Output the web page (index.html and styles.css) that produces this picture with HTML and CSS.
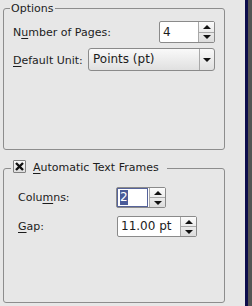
FILE: index.html
```html
<!DOCTYPE html>
<html lang="en">

<head>
    <meta charset="UTF-8">
    <title>Document</title>
    <link rel="stylesheet" href="styles.css">
</head>

<body>
    <div class="screen">
        <div class="pane">
            <fieldset class="group options">
                <legend>Options</legend>
                <div class="row">
                    <label>N<u>u</u>mber of Pages:</label>
                    <div class="spin pages">
                        <span class="val">4</span>
                        <span class="btns"><i class="up"></i><i class="down"></i></span>
                    </div>
                </div>
                <div class="row">
                    <label><u>D</u>efault Unit:</label>
                    <div class="combo">
                        <span class="val">Points (pt)</span>
                        <span class="arrow"><i class="down"></i></span>
                    </div>
                </div>
            </fieldset>

            <fieldset class="group frames">
                <legend>
                    <span class="check">
                        <svg width="9" height="9" viewBox="0 0 9 9">
                            <path d="M1 1 L8 8 M8 1 L1 8" stroke="#111" stroke-width="2.4" fill="none" />
                        </svg>
                    </span>
                    <span><u>A</u>utomatic Text Frames</span>
                </legend>
                <div class="form">
                    <label>Colu<u>m</u>ns:</label>
                    <div class="spin cols">
                        <span class="val focus"><b>2</b></span>
                        <span class="btns"><i class="up"></i><i class="down"></i></span>
                    </div>
                    <label><u>G</u>ap:</label>
                    <div class="spin gap">
                        <span class="val">11.00 pt</span>
                        <span class="btns"><i class="up"></i><i class="down"></i></span>
                    </div>
                </div>
            </fieldset>
        </div>
        <div class="edge"></div>
    </div>
</body>

</html>
```

FILE: styles.css
```css
* {
    margin: 0;
    padding: 0;
    box-sizing: border-box;
}

body {
    width: 252px;
    height: 306px;
    overflow: hidden;
    background: #545454;
    font-family: "DejaVu Sans", sans-serif;
    font-size: 11px;
    line-height: 13px;
    color: #1c1c1c;
}

.screen {
    display: flex;
    height: 306px;
}

.pane {
    width: 245px;
    background: #e7e7e7;
    padding: 2px 0 0 3px;
}

.edge {
    width: 3px;
    background: #0d0d4c;
}

u {
    text-decoration: underline;
    text-underline-offset: 2px;
}

/* group boxes */
.group {
    width: 222px;
    border: 1px solid #8d8d8d;
    border-radius: 3px;
}

.options {
    height: 148px;
    padding: 6px 9px 0 9px;
}

.options legend {
    margin-left: -3px;
    padding: 0 2px 0 1px;
}

.frames {
    height: 143px;
    margin-top: 10px;
    padding: 10px 9px 0 14px;
}

.frames legend {
    display: flex;
    gap: 7px;
    margin-left: -7px;
    padding: 0 8px 3px 2px;
}

.frames legend span:last-child {
    padding-top: 1px;
}

.check {
    width: 13px;
    height: 13px;
    border: 1px solid #808080;
    border-radius: 1px;
    background: linear-gradient(#fafafa, #dedede);
    display: flex;
    align-items: center;
    justify-content: center;
}

.row {
    display: flex;
    align-items: center;
    justify-content: space-between;
    margin-bottom: 5px;
}

.row label {
    padding-top: 1px;
}

.form {
    display: grid;
    grid-template-columns: 99px auto;
    justify-content: start;
    align-items: center;
    row-gap: 8px;
}

/* spin boxes */
.spin {
    display: flex;
    height: 21px;
    border: 1px solid #8a8a8a;
    border-radius: 2px;
    background: #fff;
}

.spin.pages {
    width: 56px;
    height: 22px;
}

.spin.cols {
    width: 50px;
    margin-left: -1px;
}

.spin.gap {
    width: 80px;
}

.spin .val {
    flex: 1;
    padding-left: 3px;
    font-size: 12px;
    display: flex;
    align-items: center;
}

.spin .val.focus {
    border: 1px solid #56639a;
    margin-right: 1px;
    padding-left: 2px;
}

.spin .val b {
    font-weight: normal;
    color: #fff;
    background: #4a5b99;
    line-height: 15px;
}

.btns {
    width: 16px;
    display: flex;
    flex-direction: column;
    border-left: 1px solid #a8a8a8;
    background: linear-gradient(#fbfbfb, #dcdcdc);
}

.btns i {
    flex: 1;
    display: flex;
    align-items: center;
    justify-content: center;
}

.btns i + i {
    border-top: 1px solid #a8a8a8;
}

.up::before,
.down::before {
    content: '';
    width: 0;
    height: 0;
    border-left: 4px solid transparent;
    border-right: 4px solid transparent;
}

.up::before {
    border-bottom: 4px solid #111;
}

.down::before {
    border-top: 4px solid #111;
}

/* combo */
.combo {
    display: flex;
    width: 127px;
    height: 23px;
    border: 1px solid #8a8a8a;
    border-radius: 3px;
    background: linear-gradient(#f9f9f9, #e0e0e0);
}

.combo .val {
    flex: 1;
    padding-left: 4px;
    font-size: 12px;
    display: flex;
    align-items: center;
}

.combo .arrow {
    width: 15px;
    border-left: 1px solid #a8a8a8;
    display: flex;
    align-items: center;
    justify-content: center;
}

.combo .arrow i {
    display: flex;
}
```
